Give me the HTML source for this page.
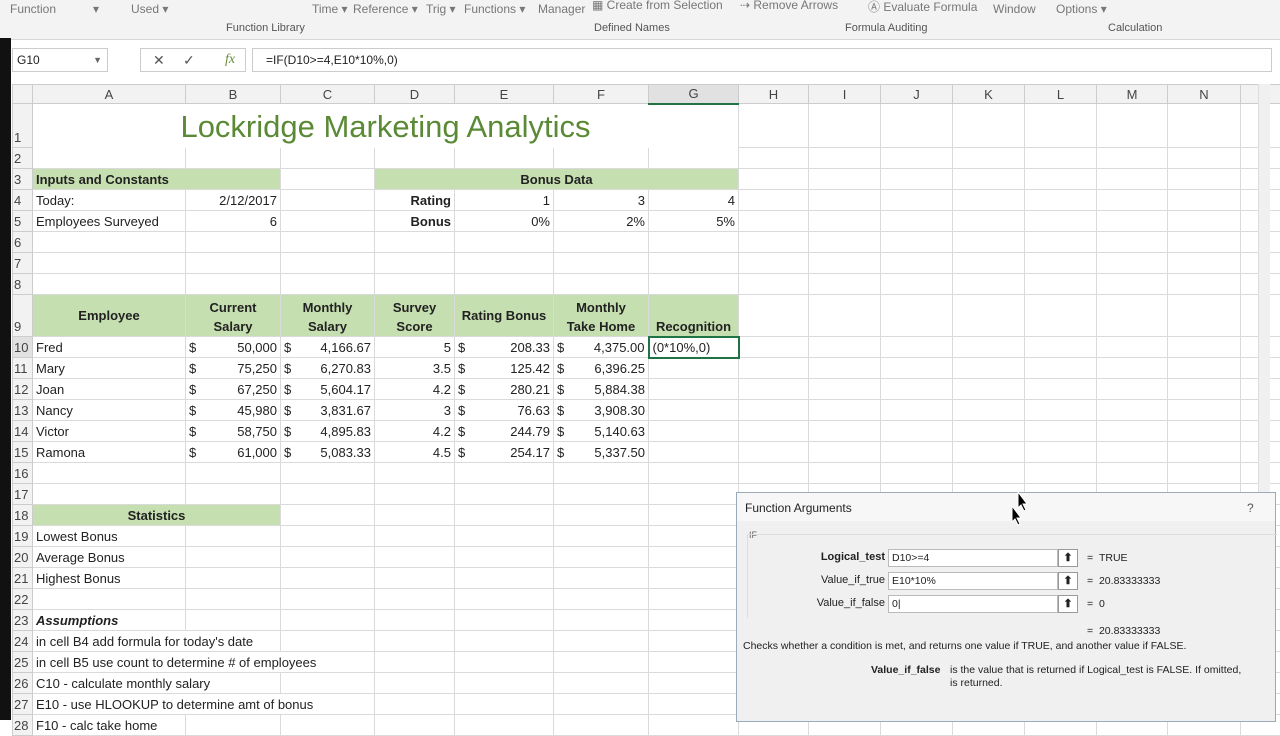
<!DOCTYPE html>
<html><head><meta charset="utf-8"><style>
*{margin:0;padding:0;box-sizing:border-box}
body{width:1280px;height:720px;overflow:hidden;background:#fff;font-family:"Liberation Sans",sans-serif;position:relative;color:#222}
.rib{position:absolute;left:0;top:0;width:1280px;height:40px;background:#f3f3f3;border-bottom:1px solid #d6d6d6;font-size:12px;color:#777}
.rib span{position:absolute}
.fb{position:absolute;left:0;top:40px;width:1280px;height:44px;background:#fff}
.strip{position:absolute;left:0;top:38px;width:11px;height:682px;background:#111}
table{position:absolute;left:12px;top:84px;width:1278px;border-collapse:collapse;table-layout:fixed;font-size:13px}
td{border:1px solid #dadada;height:21px;padding:0 3px;white-space:nowrap;overflow:visible;vertical-align:bottom;line-height:19px}
tr.h td{background:#f2f2f2;color:#444;text-align:center;font-size:13px;height:19px;line-height:17px;vertical-align:middle;border-color:#ccc}
td.rn{background:#f2f2f2;color:#444;text-align:left;padding-left:1px;font-size:13px;border-color:#ccc}
.g{background:#c6dfb0;font-weight:bold}
.c{text-align:center}.r{text-align:right}.b{font-weight:bold}
.dl{display:flex;justify-content:space-between}
.dlg{position:absolute;left:736px;top:492px;width:540px;height:230px;background:#f0f0f0;border:1px solid #9ab;font-size:11px;color:#222}
.in{position:absolute;left:151px;width:170px;height:18px;background:#fff;border:1px solid #bbb;padding-left:3px;line-height:16px;font-size:10.5px}
.bt{position:absolute;left:321px;width:20px;height:18px;background:#fff;border:1px solid #999;text-align:center;font-size:11px;line-height:16px;font-weight:bold}
.lb{position:absolute;right:390px;font-size:11px}
.v{position:absolute;left:350px;font-size:10.5px}
</style></head><body>
<div class="rib">
<span style="left:10px;top:2px">Function</span><span style="left:93px;top:2px">▾</span><span style="left:131px;top:2px">Used ▾</span>
<span style="left:312px;top:2px">Time ▾</span><span style="left:353px;top:2px">Reference ▾</span><span style="left:426px;top:2px">Trig ▾</span><span style="left:464px;top:2px">Functions ▾</span>
<span style="left:538px;top:2px">Manager</span><span style="left:592px;top:-2px">▦ Create from Selection</span>
<span style="left:740px;top:-2px">⇢ Remove Arrows</span><span style="left:868px;top:-2px">Ⓐ Evaluate Formula</span>
<span style="left:993px;top:2px">Window</span><span style="left:1056px;top:2px">Options ▾</span>
<span style="left:226px;top:22px;color:#555;font-size:11px">Function Library</span>
<span style="left:594px;top:22px;color:#555;font-size:11px">Defined Names</span>
<span style="left:845px;top:22px;color:#555;font-size:11px">Formula Auditing</span>
<span style="left:1108px;top:22px;color:#555;font-size:11px">Calculation</span>
</div>
<div class="fb">
<div style="position:absolute;left:12px;top:8px;width:96px;height:24px;border:1px solid #ccc;font-size:12px;line-height:22px;padding-left:4px">G10<span style="position:absolute;right:5px;font-size:9px;color:#666">▼</span></div>
<div style="position:absolute;left:140px;top:8px;width:106px;height:24px;border:1px solid #ccc;font-size:14px;color:#555;line-height:22px"><span style="position:absolute;left:12px">✕</span><span style="position:absolute;left:42px">✓</span><span style="position:absolute;left:84px;font-style:italic;font-family:'Liberation Serif';color:#6a8f3a">fx</span></div>
<div style="position:absolute;left:252px;top:8px;width:1020px;height:24px;border:1px solid #ccc;font-size:12px;line-height:22px;padding-left:13px">=IF(D10&gt;=4,E10*10%,0)</div>
</div>
<div class="strip"></div>
<table>
<colgroup><col style="width:20px"><col style="width:153px"><col style="width:95px"><col style="width:94px"><col style="width:80px"><col style="width:99px"><col style="width:95px"><col style="width:90px"><col style="width:70px"><col style="width:72px"><col style="width:72px"><col style="width:72px"><col style="width:72px"><col style="width:71px"><col style="width:73px"><col style="width:50px"></colgroup>
<tr class="h"><td></td><td>A</td><td>B</td><td>C</td><td>D</td><td>E</td><td>F</td><td style="background:#e1e1e1;border-bottom:2px solid #217346">G</td><td>H</td><td>I</td><td>J</td><td>K</td><td>L</td><td>M</td><td>N</td><td></td></tr>
<tr style="height:44px"><td class="rn">1</td><td colspan="7" style="font-size:31px;color:#5a8a35;text-align:center;height:44px;line-height:40px;border-color:transparent #dadada">Lockridge Marketing Analytics</td><td></td><td></td><td></td><td></td><td></td><td></td><td></td><td></td></tr>
<tr><td class="rn">2</td><td></td><td></td><td></td><td></td><td></td><td></td><td></td><td></td><td></td><td></td><td></td><td></td><td></td><td></td><td></td></tr>
<tr><td class="rn">3</td><td colspan="2" class="g">Inputs and Constants</td><td></td><td colspan="4" class="g c">Bonus Data</td><td></td><td></td><td></td><td></td><td></td><td></td><td></td><td></td></tr>
<tr><td class="rn">4</td><td>Today:</td><td class="r">2/12/2017</td><td></td><td class="r b">Rating</td><td class="r">1</td><td class="r">3</td><td class="r">4</td><td></td><td></td><td></td><td></td><td></td><td></td><td></td><td></td></tr>
<tr><td class="rn">5</td><td>Employees Surveyed</td><td class="r">6</td><td></td><td class="r b">Bonus</td><td class="r">0%</td><td class="r">2%</td><td class="r">5%</td><td></td><td></td><td></td><td></td><td></td><td></td><td></td><td></td></tr>
<tr><td class="rn">6</td><td></td><td></td><td></td><td></td><td></td><td></td><td></td><td></td><td></td><td></td><td></td><td></td><td></td><td></td><td></td></tr>
<tr><td class="rn">7</td><td></td><td></td><td></td><td></td><td></td><td></td><td></td><td></td><td></td><td></td><td></td><td></td><td></td><td></td><td></td></tr>
<tr><td class="rn">8</td><td></td><td></td><td></td><td></td><td></td><td></td><td></td><td></td><td></td><td></td><td></td><td></td><td></td><td></td><td></td></tr>
<tr style="height:42px"><td class="rn">9</td><td class="g c" style="vertical-align:middle">Employee</td><td class="g c">Current<br>Salary</td><td class="g c">Monthly<br>Salary</td><td class="g c">Survey<br>Score</td><td class="g c" style="vertical-align:middle">Rating Bonus</td><td class="g c">Monthly<br>Take Home</td><td class="g c">Recognition</td><td></td><td></td><td></td><td></td><td></td><td></td><td></td><td></td></tr>
<tr><td class="rn" style="background:#e1e1e1">10</td><td>Fred</td><td><div class="dl"><span>$</span><span>50,000</span></div></td><td><div class="dl"><span>$</span><span>4,166.67</span></div></td><td class="r">5</td><td><div class="dl"><span>$</span><span>208.33</span></div></td><td><div class="dl"><span>$</span><span>4,375.00</span></div></td><td style="border:2px solid #217346">(0*10%,0)</td><td></td><td></td><td></td><td></td><td></td><td></td><td></td><td></td></tr>
<tr><td class="rn">11</td><td>Mary</td><td><div class="dl"><span>$</span><span>75,250</span></div></td><td><div class="dl"><span>$</span><span>6,270.83</span></div></td><td class="r">3.5</td><td><div class="dl"><span>$</span><span>125.42</span></div></td><td><div class="dl"><span>$</span><span>6,396.25</span></div></td><td></td><td></td><td></td><td></td><td></td><td></td><td></td><td></td><td></td></tr>
<tr><td class="rn">12</td><td>Joan</td><td><div class="dl"><span>$</span><span>67,250</span></div></td><td><div class="dl"><span>$</span><span>5,604.17</span></div></td><td class="r">4.2</td><td><div class="dl"><span>$</span><span>280.21</span></div></td><td><div class="dl"><span>$</span><span>5,884.38</span></div></td><td></td><td></td><td></td><td></td><td></td><td></td><td></td><td></td><td></td></tr>
<tr><td class="rn">13</td><td>Nancy</td><td><div class="dl"><span>$</span><span>45,980</span></div></td><td><div class="dl"><span>$</span><span>3,831.67</span></div></td><td class="r">3</td><td><div class="dl"><span>$</span><span>76.63</span></div></td><td><div class="dl"><span>$</span><span>3,908.30</span></div></td><td></td><td></td><td></td><td></td><td></td><td></td><td></td><td></td><td></td></tr>
<tr><td class="rn">14</td><td>Victor</td><td><div class="dl"><span>$</span><span>58,750</span></div></td><td><div class="dl"><span>$</span><span>4,895.83</span></div></td><td class="r">4.2</td><td><div class="dl"><span>$</span><span>244.79</span></div></td><td><div class="dl"><span>$</span><span>5,140.63</span></div></td><td></td><td></td><td></td><td></td><td></td><td></td><td></td><td></td><td></td></tr>
<tr><td class="rn">15</td><td>Ramona</td><td><div class="dl"><span>$</span><span>61,000</span></div></td><td><div class="dl"><span>$</span><span>5,083.33</span></div></td><td class="r">4.5</td><td><div class="dl"><span>$</span><span>254.17</span></div></td><td><div class="dl"><span>$</span><span>5,337.50</span></div></td><td></td><td></td><td></td><td></td><td></td><td></td><td></td><td></td><td></td></tr>
<tr><td class="rn">16</td><td></td><td></td><td></td><td></td><td></td><td></td><td></td><td></td><td></td><td></td><td></td><td></td><td></td><td></td><td></td></tr>
<tr><td class="rn">17</td><td></td><td></td><td></td><td></td><td></td><td></td><td></td><td></td><td></td><td></td><td></td><td></td><td></td><td></td><td></td></tr>
<tr><td class="rn">18</td><td colspan="2" class="g c">Statistics</td><td></td><td></td><td></td><td></td><td></td><td></td><td></td><td></td><td></td><td></td><td></td><td></td><td></td></tr>
<tr><td class="rn">19</td><td>Lowest Bonus</td><td></td><td></td><td></td><td></td><td></td><td></td><td></td><td></td><td></td><td></td><td></td><td></td><td></td><td></td></tr>
<tr><td class="rn">20</td><td>Average Bonus</td><td></td><td></td><td></td><td></td><td></td><td></td><td></td><td></td><td></td><td></td><td></td><td></td><td></td><td></td></tr>
<tr><td class="rn">21</td><td>Highest Bonus</td><td></td><td></td><td></td><td></td><td></td><td></td><td></td><td></td><td></td><td></td><td></td><td></td><td></td><td></td></tr>
<tr><td class="rn">22</td><td></td><td></td><td></td><td></td><td></td><td></td><td></td><td></td><td></td><td></td><td></td><td></td><td></td><td></td><td></td></tr>
<tr><td class="rn">23</td><td style="font-weight:bold;font-style:italic">Assumptions</td><td></td><td></td><td></td><td></td><td></td><td></td><td></td><td></td><td></td><td></td><td></td><td></td><td></td><td></td></tr>
<tr><td class="rn">24</td><td style="border-right-color:transparent">in cell B4 add formula for today's date</td><td></td><td></td><td></td><td></td><td></td><td></td><td></td><td></td><td></td><td></td><td></td><td></td><td></td><td></td></tr>
<tr><td class="rn">25</td><td style="border-right-color:transparent">in cell B5 use count to determine # of employees</td><td style="border-right-color:transparent"></td><td></td><td></td><td></td><td></td><td></td><td></td><td></td><td></td><td></td><td></td><td></td><td></td><td></td></tr>
<tr><td class="rn">26</td><td style="border-right-color:transparent">C10 - calculate monthly salary</td><td></td><td></td><td></td><td></td><td></td><td></td><td></td><td></td><td></td><td></td><td></td><td></td><td></td><td></td></tr>
<tr><td class="rn">27</td><td style="border-right-color:transparent">E10 - use HLOOKUP to determine amt of bonus</td><td style="border-right-color:transparent"></td><td></td><td></td><td></td><td></td><td></td><td></td><td></td><td></td><td></td><td></td><td></td><td></td><td></td></tr>
<tr><td class="rn">28</td><td>F10 - calc take home</td><td></td><td></td><td></td><td></td><td></td><td></td><td></td><td></td><td></td><td></td><td></td><td></td><td></td><td></td></tr>
</table>
<div style="position:absolute;left:1258px;top:84px;width:12px;height:410px;background:#f0f0f0;border-left:1px solid #ddd"></div>
<div class="dlg">
<div style="position:absolute;left:0;top:0;width:100%;height:28px;background:#f7f7f7"></div>
<div style="position:absolute;left:8px;top:8px;font-size:12px">Function Arguments</div>
<div style="position:absolute;left:510px;top:8px;font-size:12px;color:#555">?</div>
<div style="position:absolute;left:12px;top:37px;font-size:9px;color:#666">IF</div>
<div style="position:absolute;left:10px;top:41px;width:530px;height:84px;border-top:1px solid #ddd;border-left:1px solid #ddd"></div>
<div class="lb" style="top:58px;font-weight:bold">Logical_test</div><div class="in" style="top:56px">D10&gt;=4</div><div class="bt" style="top:56px">⬆</div><div class="v" style="top:59px">=&nbsp;&nbsp;TRUE</div>
<div class="lb" style="top:81px">Value_if_true</div><div class="in" style="top:79px">E10*10%</div><div class="bt" style="top:79px">⬆</div><div class="v" style="top:82px">=&nbsp;&nbsp;20.83333333</div>
<div class="lb" style="top:104px">Value_if_false</div><div class="in" style="top:102px">0|</div><div class="bt" style="top:102px">⬆</div><div class="v" style="top:105px">=&nbsp;&nbsp;0</div>
<div class="v" style="top:132px">=&nbsp;&nbsp;20.83333333</div>
<div style="position:absolute;left:6px;top:147px;font-size:10.5px">Checks whether a condition is met, and returns one value if TRUE, and another value if FALSE.</div>
<div style="position:absolute;left:134px;top:171px;font-size:10.5px;font-weight:bold">Value_if_false</div>
<div style="position:absolute;left:213px;top:171px;font-size:10.5px;line-height:13px">is the value that is returned if Logical_test is FALSE. If omitted,<br>is returned.</div>
</div>
<svg style="position:absolute;left:1010px;top:490px" width="20" height="40" viewBox="0 0 20 40"><path d="M8 2 L8 18 L11 15 L14 21 L16 20 L13 14 L17 14 Z" fill="#000" stroke="#fff" stroke-width="1"/><path d="M2 16 L2 32 L5 29 L8 35 L10 34 L7 28 L11 28 Z" fill="#000" stroke="#fff" stroke-width="1"/></svg>
</body></html>
